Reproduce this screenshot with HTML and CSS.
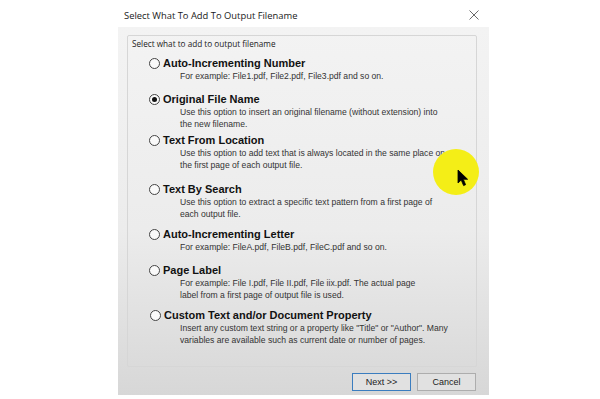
FILE: index.html
```html
<!DOCTYPE html>
<html lang="en">
<head>
    <meta charset="UTF-8">
    <meta name="viewport" content="width=device-width, initial-scale=1.0">
    <title>Select What To Add To Output Filename</title>
    <link rel="stylesheet" href="styles.css">
</head>
<body>
    <div class="dialog">
        <div class="titlebar">
            <span class="title">Select What To Add To Output Filename</span>
            <svg class="close" width="10" height="10" viewBox="0 0 10 10">
                <path d="M0.5 0.5 L9.5 9.5 M9.5 0.5 L0.5 9.5" stroke="#6a6a6a" stroke-width="1" fill="none"/>
            </svg>
        </div>
        <div class="body">
            <div class="group">
                <div class="group-label">Select what to add to output filename</div>
                <div class="options">
                    <div class="option">
                        <div class="option-title"><span class="radio"></span>Auto-Incrementing Number</div>
                        <div class="option-desc">For example: File1.pdf, File2.pdf, File3.pdf and so on.</div>
                    </div>
                    <div class="option gap-lg">
                        <div class="option-title"><span class="radio checked"></span>Original File Name</div>
                        <div class="option-desc">Use this option to insert an original filename (without extension) into<br>the new filename.</div>
                    </div>
                    <div class="option gap-sm">
                        <div class="option-title"><span class="radio"></span>Text From Location</div>
                        <div class="option-desc">Use this option to add text that is always located in the same place on<br>the first page of each output file.</div>
                    </div>
                    <div class="option gap-xl">
                        <div class="option-title"><span class="radio"></span>Text By Search</div>
                        <div class="option-desc">Use this option to extract a specific text pattern from a first page of<br>each output file.</div>
                    </div>
                    <div class="option gap-md">
                        <div class="option-title"><span class="radio"></span>Auto-Incrementing Letter</div>
                        <div class="option-desc">For example: FileA.pdf, FileB.pdf, FileC.pdf and so on.</div>
                    </div>
                    <div class="option gap-lg">
                        <div class="option-title"><span class="radio"></span>Page Label</div>
                        <div class="option-desc">For example: File I.pdf, File II.pdf, File iix.pdf. The actual page<br>label from a first page of output file is used.</div>
                    </div>
                    <div class="option gap-md shifted">
                        <div class="option-title"><span class="radio"></span>Custom Text and/or Document Property</div>
                        <div class="option-desc">Insert any custom text string or a property like "Title" or "Author". Many<br>variables are available such as current date or number of pages.</div>
                    </div>
                </div>
            </div>
            <div class="buttons">
                <button class="btn default">Next &gt;&gt;</button>
                <button class="btn">Cancel</button>
            </div>
        </div>
    </div>

    <div class="pointer">
        <svg width="12" height="18" viewBox="0 0 12 18">
            <path d="M1 1 L1 14 L4.2 11 L6.6 16.6 L8.6 15.7 L6.3 10.3 L10.6 10.3 Z" fill="#000" stroke="#000" stroke-width="0.8"/>
        </svg>
    </div>
</body>
</html>
```

FILE: styles.css
```css
body {
    margin: 0;
    background-color: #fff;
    width: 600px;
    height: 399px;
    overflow: hidden;
    position: relative;
    font-family: "Liberation Sans", Arial, sans-serif;
}

.dialog {
    margin: 3px 0 0 118px;
    width: 371px;
}

.titlebar {
    height: 24px;
    display: flex;
    align-items: center;
    justify-content: space-between;
    padding: 0 10px 0 6px;
    background-color: #fff;
}

.title {
    font-family: "Open Sans", sans-serif;
    font-size: 9.4px;
    color: #1a1a1a;
}

.close {
    display: block;
}

.body {
    height: 368px;
    padding: 8px 12px 0 9px;
    box-sizing: border-box;
    background: linear-gradient(#f3f3f3, #ececec 55%, #d7d7d7);
}

.group {
    border: 1px solid #d6d6d6;
    border-radius: 2px;
    height: 332px;
    box-sizing: border-box;
    padding: 2px 0 0 4px;
}

.group-label {
    font-family: "Open Sans", sans-serif;
    font-size: 8.2px;
    line-height: 12px;
    color: #222;
}

.options {
    padding: 7px 0 0 17px;
}

.option-title {
    display: flex;
    align-items: center;
    font-weight: bold;
    font-size: 11px;
    line-height: 13px;
    color: #111;
}

.option-desc {
    font-size: 8.6px;
    line-height: 12px;
    color: #333;
    padding-left: 31px;
}

.gap-sm { margin-top: 4px; }
.gap-md { margin-top: 8px; }
.gap-lg { margin-top: 11px; }
.gap-xl { margin-top: 12px; }

.shifted .option-title {
    margin-left: 1px;
}

.radio {
    width: 9px;
    height: 9px;
    border: 1px solid #444;
    border-radius: 50%;
    background-color: #fafafa;
    margin-right: 3px;
    position: relative;
    flex-shrink: 0;
}

.radio.checked::after {
    content: "";
    position: absolute;
    left: 2px;
    top: 2px;
    width: 5px;
    height: 5px;
    border-radius: 50%;
    background-color: #111;
}

.buttons {
    display: flex;
    justify-content: flex-end;
    gap: 6px;
    padding: 6px 1px 0 0;
}

.btn {
    width: 59px;
    height: 18px;
    background-color: #e1e1e1;
    border: 1px solid #adadad;
    font-family: "Liberation Sans", Arial, sans-serif;
    font-size: 9px;
    color: #222;
    padding: 0;
}

.btn.default {
    border-color: #3b7dbf;
}

.pointer {
    position: absolute;
    left: 433px;
    top: 149px;
    width: 46px;
    height: 46px;
    border-radius: 50%;
    background-color: #f4ee17;
}

.pointer svg {
    position: absolute;
    left: 24px;
    top: 20px;
}
```
